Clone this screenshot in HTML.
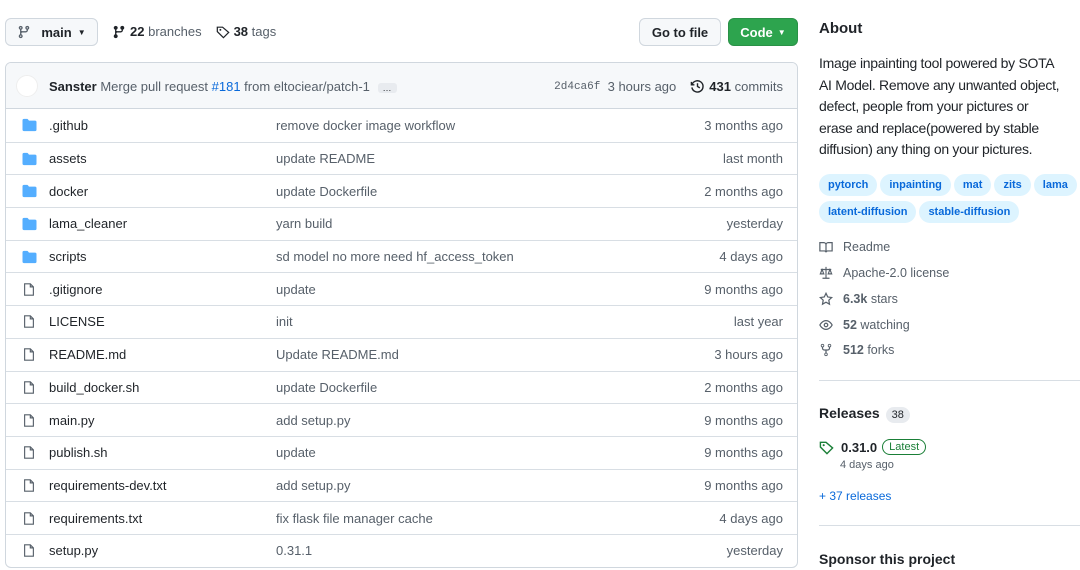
<!DOCTYPE html><html><head><style>
*{box-sizing:border-box;margin:0;padding:0}
body{width:1080px;height:570px;overflow:hidden;background:#fff;font-family:"Liberation Sans",sans-serif;color:#1f2328;font-size:13px;position:relative}
.abs{position:absolute}
.btn{position:absolute;border:1px solid #d0d7de;border-radius:6px;background:#f6f8fa;font-weight:bold;font-size:13px;display:flex;align-items:center;justify-content:center}
.box{position:absolute;left:5px;top:62px;width:793px;height:506px;border:1px solid #d0d7de;border-radius:6px;overflow:hidden}
.hdr{height:46px;background:#f6f8fa;border-bottom:1px solid #d0d7de;position:relative}
.row{height:32.7px;border-top:1px solid #d8dee4;position:relative;display:flex;align-items:center}
.row:first-of-type{border-top:none}
.row .n{position:absolute;left:43px}
.row .m{position:absolute;left:270px;color:#57606a}
.row .d{position:absolute;right:14px;color:#57606a}
.row svg{position:absolute;left:16px}
.gray{color:#57606a}
.tag{display:inline-block;background:#ddf4ff;color:#0969da;font-weight:bold;font-size:11px;border-radius:12px;padding:4px 9px;margin:0 3px 5px 0}
.side div.it{position:absolute;left:819px;display:flex;align-items:center;color:#57606a;font-size:12.5px}
.it svg{margin-right:10px}
</style></head><body>
<div class="btn" style="left:5px;top:18px;width:93px;height:28px"><svg width="14" height="14" viewBox="0 0 16 16" style="margin-right:10px"><path fill="#57606a" d="M9.5 3.25a2.25 2.25 0 1 1 3 2.12V6A2.5 2.5 0 0 1 10 8.5H6a1 1 0 0 0-1 1v1.130a2.25 2.25 0 1 1-1.5 0V5.37a2.25 2.25 0 1 1 1.5 0v1.53A2.5 2.5 0 0 1 6 7h4a1 1 0 0 0 1-1v-.63a2.25 2.25 0 0 1-1.5-2.12ZM4.25 12a.75.75 0 1 0 0 1.5.75.75 0 0 0 0-1.5ZM3.5 3.25a.75.75 0 1 0 1.5 0 .75.75 0 0 0-1.5 0Zm8.25-.75a.75.75 0 1 0 0 1.5.75.75 0 0 0 0-1.5Z"/></svg>main <span style="margin-left:6px;font-size:8px">▼</span></div>
<div class="abs" style="left:112px;top:24px;display:flex;align-items:center"><svg width="14" height="14" viewBox="0 0 16 16"><path fill="#1f2328" d="M9.5 3.25a2.25 2.25 0 1 1 3 2.12V6A2.5 2.5 0 0 1 10 8.5H6a1 1 0 0 0-1 1v1.13a2.25 2.25 0 1 1-1.5 0V5.37a2.25 2.25 0 1 1 1.5 0v1.53A2.5 2.5 0 0 1 6 7h4a1 1 0 0 0 1-1v-.63a2.25 2.25 0 0 1-1.5-2.12Z"/></svg><b style="margin-left:4px">22</b>&nbsp;<span class="gray">branches</span>
<svg width="14" height="14" viewBox="0 0 16 16" style="margin-left:14px"><path fill="none" stroke="#1f2328" stroke-width="1.4" d="M1.5 2.5v5l7 7 6-6-7-6h-6z"/><circle cx="5" cy="5.5" r="1.1" fill="#1f2328"/></svg><b style="margin-left:4px">38</b>&nbsp;<span class="gray">tags</span></div>
<div class="btn" style="left:639px;top:18px;width:82px;height:28px">Go to file</div>
<div class="btn" style="left:728px;top:18px;width:70px;height:28px;background:#2da44e;border-color:#2a9147;color:#fff">Code <span style="margin-left:5px;font-size:8px">▼</span></div>
<div class="box"><div class="hdr">
<div class="abs" style="left:10px;top:12px;width:22px;height:22px;border-radius:50%;background:#fff;border:1px solid #eee"></div>
<div class="abs" style="left:43px;top:16px"><b>Sanster</b> <span class="gray">Merge pull request</span> <span style="color:#0969da">#181</span> <span class="gray">from eltociear/patch-1</span> <span style="background:#e8ebef;font-size:9px;padding:0 5px;border-radius:3px;margin-left:4px">…</span></div>
<div class="abs" style="right:14px;top:16px;display:flex;align-items:center" ><span style="font-family:'Liberation Mono',monospace;font-size:11px" class="gray">2d4ca6f</span>&nbsp;&nbsp;<span class="gray">3 hours ago</span>
<svg width="15" height="15" viewBox="0 0 16 16" style="margin:0 4px 0 14px"><path fill="none" stroke="#1f2328" stroke-width="1.5" d="M2.2 6A6 6 0 1 1 2 9M1.5 3v3.2h3.2M8 4.5V8l2.5 1.5"/></svg><b>431</b>&nbsp;<span class="gray">commits</span></div>
</div>
<div id="rows"></div></div>
<div class="abs" style="left:819px;top:20px;font-size:15px;font-weight:bold">About</div>
<div class="abs" style="left:819px;top:53px;width:246px;font-size:14px;letter-spacing:-0.3px;line-height:21.5px;color:#1f2328">Image inpainting tool powered by SOTA AI Model. Remove any unwanted object, defect, people from your pictures or erase and replace(powered by stable diffusion) any thing on your pictures.</div>
<div class="abs" style="left:819px;top:174px;width:265px;line-height:14px"><span class="tag">pytorch</span><span class="tag">inpainting</span><span class="tag">mat</span><span class="tag">zits</span><span class="tag">lama</span><br><span class="tag">latent-diffusion</span><span class="tag">stable-diffusion</span></div>
<div class="side">
<div class="it" style="top:240px"><svg width="14" height="14" viewBox="0 0 16 16"><path fill="none" stroke="#57606a" stroke-width="1.4" d="M1 3h4.5A2.5 2.5 0 0 1 8 5.5V14a2 2 0 0 0-2-1.5H1zM15 3h-4.5A2.5 2.5 0 0 0 8 5.5V14a2 2 0 0 1 2-1.5h5z"/></svg>Readme</div>
<div class="it" style="top:266px"><svg width="14" height="14" viewBox="0 0 16 16"><path fill="none" stroke="#57606a" stroke-width="1.3" d="M8 1v13M4 14h8M2 4h12M3.5 4l-2 5h4zM12.5 4l-2 5h4z"/></svg>Apache-2.0 license</div>
<div class="it" style="top:292px"><svg width="14" height="14" viewBox="0 0 16 16"><path fill="none" stroke="#57606a" stroke-width="1.4" d="M8 1.5l2 4.2 4.5.6-3.3 3.1.8 4.5L8 11.7l-4 2.2.8-4.5L1.5 6.3 6 5.7z"/></svg><b style="color:#57606a">6.3k</b>&nbsp;stars</div>
<div class="it" style="top:318px"><svg width="14" height="14" viewBox="0 0 16 16"><path fill="none" stroke="#57606a" stroke-width="1.4" d="M1 8s2.5-5 7-5 7 5 7 5-2.5 5-7 5-7-5-7-5z"/><circle cx="8" cy="8" r="2" fill="none" stroke="#57606a" stroke-width="1.4"/></svg><b style="color:#57606a">52</b>&nbsp;watching</div>
<div class="it" style="top:343px"><svg width="14" height="14" viewBox="0 0 16 16"><path fill="none" stroke="#57606a" stroke-width="1.4" d="M4 4v2a2 2 0 0 0 2 2h4a2 2 0 0 0 2-2V4M8 8v4"/><circle cx="4" cy="3" r="1.5" fill="none" stroke="#57606a"/><circle cx="12" cy="3" r="1.5" fill="none" stroke="#57606a"/><circle cx="8" cy="13" r="1.5" fill="none" stroke="#57606a"/></svg><b style="color:#57606a">512</b>&nbsp;forks</div>
</div>
<div class="abs" style="left:819px;top:380px;width:261px;border-top:1px solid #d8dee4"></div>
<div class="abs" style="left:819px;top:405px;font-size:14px;font-weight:bold">Releases <span style="background:#e8ebef;font-size:11px;padding:2px 6px;border-radius:10px;font-weight:normal;margin-left:2px">38</span></div>
<div class="abs" style="left:819px;top:439px;display:flex;align-items:center"><svg width="15" height="15" viewBox="0 0 16 16"><path fill="none" stroke="#1a7f37" stroke-width="1.5" d="M1.5 2.5v5l7 7 6-6-7-6h-6z"/><circle cx="5" cy="5.5" r="1.1" fill="#1a7f37"/></svg><b style="margin-left:7px">0.31.0</b><span style="margin-left:5px;border:1px solid #1a7f37;color:#1a7f37;border-radius:10px;font-size:11px;padding:1px 6px">Latest</span></div>
<div class="abs gray" style="left:840px;top:459px;font-size:11px">4 days ago</div>
<div class="abs" style="left:819px;top:489px;color:#0969da;font-size:12px">+ 37 releases</div>
<div class="abs" style="left:819px;top:525px;width:261px;border-top:1px solid #d8dee4"></div>
<div class="abs" style="left:819px;top:551px;font-size:14px;font-weight:bold">Sponsor this project</div>
<script>
var r=[["d",".github","remove docker image workflow","3 months ago"],["d","assets","update README","last month"],["d","docker","update Dockerfile","2 months ago"],["d","lama_cleaner","yarn build","yesterday"],["d","scripts","sd model no more need hf_access_token","4 days ago"],["f",".gitignore","update","9 months ago"],["f","LICENSE","init","last year"],["f","README.md","Update README.md","3 hours ago"],["f","build_docker.sh","update Dockerfile","2 months ago"],["f","main.py","add setup.py","9 months ago"],["f","publish.sh","update","9 months ago"],["f","requirements-dev.txt","add setup.py","9 months ago"],["f","requirements.txt","fix flask file manager cache","4 days ago"],["f","setup.py","0.31.1","yesterday"]];
var h="";r.forEach(function(x){var ic=x[0]=="d"?'<svg width="15" height="14" viewBox="0 0 16 16"><path fill="#54aeff" d="M1.75 1A1.75 1.75 0 0 0 0 2.75v10.5C0 14.22.78 15 1.75 15h12.5A1.75 1.75 0 0 0 16 13.25v-8.5A1.75 1.75 0 0 0 14.25 3H7.5a.25.25 0 0 1-.2-.1l-.9-1.2C6.070 1.26 5.55 1 5 1H1.75Z"/></svg>':'<svg width="14" height="15" viewBox="0 0 16 16"><path fill="none" stroke="#57606a" stroke-width="1.3" d="M3 1.5h6.5L13 5v9.5H3zM9.5 1.5V5H13"/></svg>';h+='<div class="row">'+ic+'<span class="n">'+x[1]+'</span><span class="m">'+x[2]+'</span><span class="d">'+x[3]+'</span></div>';});document.getElementById("rows").innerHTML=h;
</script>
</body></html>
